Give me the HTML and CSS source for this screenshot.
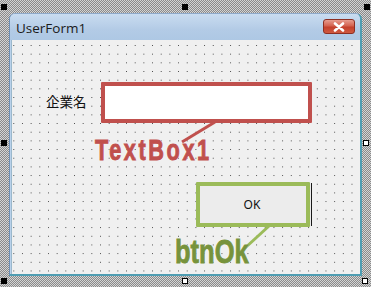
FILE: index.html
```html
<!DOCTYPE html>
<html lang="ja">
<head>
<meta charset="utf-8">
<title>UserForm1</title>
<link rel="stylesheet" href="styles.css">
</head>
<body>
<div class="stage">
  <div class="form">
    <div class="titlebar">
      <span class="title">UserForm1</span>
      <div class="close-btn">
        <svg width="14" height="10" viewBox="0 0 14 10"><path d="M3 1.5 L11 8.5 M11 1.5 L3 8.5" stroke="#fff" stroke-width="2.6" stroke-linecap="round"/></svg>
      </div>
    </div>
    <div class="client">
      <span class="ctl label">企業名</span>
      <div class="ctl textbox"></div>
      <div class="ctl button"><span>OK</span></div>
      <div class="ctl hl hl-red"></div>
      <div class="ctl hl hl-green"></div>
      <svg class="callouts" width="351" height="236" viewBox="0 0 351 236">
        <line x1="203" y1="82" x2="170" y2="102" stroke="#c0504d" stroke-width="3"/>
        <line x1="257" y1="186" x2="233" y2="208" stroke="#9bbb59" stroke-width="3"/>
      </svg>
      <span class="ctl note note-red">TextBox1</span>
      <span class="ctl note note-green">btnOk</span>
    </div>
  </div>
  <span class="handle h-tl"></span>
  <span class="handle h-tm"></span>
  <span class="handle h-tr"></span>
  <span class="handle h-ml"></span>
  <span class="handle hollow h-mr"></span>
  <span class="handle h-bl"></span>
  <span class="handle hollow h-bm"></span>
  <span class="handle hollow h-br"></span>
</div>
</body>
</html>
```
FILE: styles.css
```css
html, body {
  margin: 0;
  padding: 0;
}
body {
  width: 371px;
  height: 287px;
  overflow: hidden;
  font-family: "Noto Sans", "Noto Sans CJK JP", sans-serif;
}
.stage {
  position: relative;
  width: 371px;
  height: 287px;
  box-sizing: border-box;
  padding: 13px 9px 11px 9px;
  background: repeating-conic-gradient(#8a8a8a 0 25%, #d4d4d4 0 50%) 0 0 / 2px 2px;
}
.form {
  display: flex;
  flex-direction: column;
  width: 353px;
  height: 263px;
  box-sizing: border-box;
  border: 1px solid #6f8fb3;
  border-top-color: #8ea9c9;
  border-bottom: 2px solid #4f9db2;
  border-right: 2px solid #4f9db2;
  border-radius: 6px 6px 0 0;
  background: #b9d1ea;
}
.titlebar {
  height: 26px;
  flex: none;
  display: flex;
  align-items: center;
  justify-content: space-between;
  padding: 0 5px 0 6px;
  border-radius: 5px 5px 0 0;
  background: linear-gradient(#c9dcf0, #b3cbe6 60%, #aec8e4);
}
.title {
  font-family: "Open Sans", "Noto Sans", sans-serif;
  font-size: 13.5px;
  color: #1a1a1a;
  margin-top: 1px;
}
.close-btn {
  width: 32px;
  height: 15px;
  box-sizing: border-box;
  margin-top: -1px;
  border: 1px solid #8d2e22;
  border-radius: 3px;
  background: linear-gradient(#e79c8f, #d4624f 45%, #c4402c 55%, #cf5a40);
  display: flex;
  align-items: center;
  justify-content: center;
}
.client {
  position: relative;
  flex: 1;
  margin: 0 0 0 1px;
  border-left: 1px solid #9bb8cc;
  background-color: #f0f0f0;
  background-image: conic-gradient(at 1px 1px, transparent 75%, #4a4a4a 0);
  background-size: 8.68px 8.68px;
  background-position: 1.3px 5px;
}
.ctl {
  position: absolute;
}
.label {
  left: 34px;
  top: 52px;
  font-family: "Noto Sans CJK JP", sans-serif;
  font-size: 13.5px;
  line-height: 18px;
  color: #111;
}
.textbox {
  left: 92px;
  top: 44px;
  width: 205px;
  height: 35px;
  background: #fff;
  box-shadow: inset 1px 1px 0 #a0a0a0;
}
.hl {
  box-sizing: border-box;
  border-radius: 1px;
}
.hl-red {
  left: 89px;
  top: 42px;
  width: 211px;
  height: 41px;
  border: 4px solid #c0504d;
}
.button {
  left: 187px;
  top: 143px;
  width: 113px;
  height: 43px;
  box-sizing: border-box;
  background: #ececec;
  border-right: 1.5px solid #1a1a1a;
  display: flex;
  align-items: center;
  justify-content: center;
}
.button span {
  font-size: 12px;
  color: #111;
  margin-left: -6px;
}
.hl-green {
  left: 184px;
  top: 142px;
  width: 114px;
  height: 45px;
  border: 4px solid #9bbb59;
}
.callouts {
  position: absolute;
  left: 0;
  top: 0;
}
.note {
  font-family: "Liberation Sans", Arial, sans-serif;
  font-weight: bold;
  white-space: nowrap;
  transform: scaleX(0.75);
  transform-origin: 0 0;
  -webkit-text-stroke: 0.9px currentColor;
  text-shadow: 0 0 2px #fff, 0 0 2px #fff;
}
.note-red {
  left: 83px;
  top: 96px;
  font-size: 29px;
  line-height: 29px;
  letter-spacing: 3.4px;
  color: #c0504d;
}
.note-green {
  left: 163px;
  top: 194px;
  font-size: 34px;
  line-height: 34px;
  letter-spacing: 0;
  color: #77933c;
}
.handle {
  position: absolute;
  width: 6px;
  height: 6px;
  box-sizing: border-box;
  background: #000;
}
.handle.hollow {
  background: #fff;
  border: 1px solid #000;
}
.h-tl { left: 1px; top: 4px; }
.h-tm { left: 182px; top: 4px; }
.h-tr { left: 364px; top: 4px; }
.h-ml { left: 1px; top: 140px; }
.h-mr { left: 363px; top: 140px; }
.h-bl { left: 1px; top: 278px; }
.h-bm { left: 182px; top: 278px; }
.h-br { left: 362px; top: 278px; }
```
